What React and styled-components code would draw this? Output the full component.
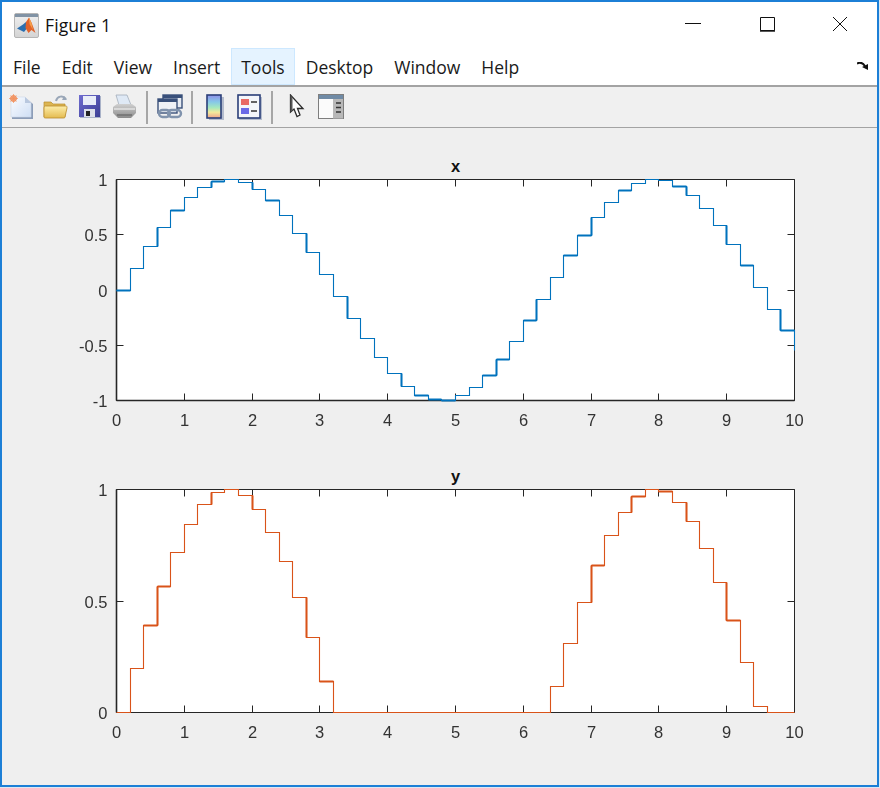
import React from "react";
import styled, { createGlobalStyle } from "styled-components";

const GlobalStyle = createGlobalStyle`
  html, body {
    margin: 0;
    padding: 0;
    background: #dce8f2;
  }
`;

const Window = styled.div`
  box-sizing: border-box;
  width: 879px;
  height: 787px;
  border: 2px solid #1c7fd6;
  background: #efefef;
  display: flex;
  flex-direction: column;
  overflow: hidden;
`;

const TitleBar = styled.div`
  height: 46px;
  background: #fff;
  display: flex;
  align-items: center;
  padding-left: 12px;
`;

const TitleText = styled.div`
  margin-left: 6px;
  font: 17.5px "Open Sans", sans-serif;
  letter-spacing: 0.1px;
  color: #111;
  flex: 1;
`;

const WinButton = styled.div`
  width: 73.5px;
  height: 46px;
  display: flex;
  align-items: center;
  justify-content: center;
  margin-top: -2px;
`;

const MenuBar = styled.div`
  height: 37px;
  background: #fff;
  border-bottom: 2px solid #a3a3a3;
  display: flex;
  align-items: stretch;
  padding-left: 1px;
  position: relative;
`;

const MenuItem = styled.div`
  box-sizing: border-box;
  padding: 0 10px;
  margin-right: 1px;
  display: flex;
  align-items: center;
  font: 17.5px "Open Sans", sans-serif;
  color: #1a1a1a;
  background: ${(p) => (p.$active ? "#e5f3ff" : "transparent")};
  box-shadow: ${(p) => (p.$active ? "inset 0 0 0 1px #cde8ff" : "none")};
`;

const DockArrow = styled.svg`
  position: absolute;
  right: 8px;
  top: 14px;
`;

const ToolBar = styled.div`
  height: 40px;
  border-bottom: 1px solid #a3a3a3;
  background: #f0f0f0;
  display: flex;
  align-items: center;
  padding-left: 2px;
`;

const ToolSlot = styled.div`
  width: ${(p) => p.$w || 35}px;
  height: 32px;
  display: flex;
  align-items: center;
  justify-content: center;
  filter: blur(0.4px);
`;

const ToolSep = styled.div`
  width: 2px;
  height: 33px;
  margin: 0 4px;
  background: #a6a6a6;
`;

const Figure = styled.div`
  flex: 1;
  background: #efefef;
  padding-top: 22px;
  display: flex;
  flex-direction: column;
  gap: 20px;
`;

const PlotSvg = styled.svg`
  display: block;
`;

const TickLabel = styled.text`
  font: 16.5px "Liberation Sans", Arial, sans-serif;
  fill: #333;
  filter: blur(0.25px);
`;

const PlotTitle = styled.text`
  font: bold 16.5px "Liberation Sans", Arial, sans-serif;
  fill: #111;
  text-anchor: middle;
`;

const sx = (t) => Math.round(114 + 67.8 * t) + 0.5;

function Plot({ title, fn, yMin, yTicks, plotH, color, thickH, thickV, heavyBottom }) {
  const top = 29.5;
  const bottom = top + plotH;
  const sy = (v) => Math.round(top + ((1 - v) / (1 - yMin)) * plotH - 0.5) + 0.5;
  const left = sx(0);
  const right = sx(10);

  const steps = [];
  for (let i = 0; i < 50; i++) steps.push({ t: i / 5, v: fn(i / 5) });
  let d = `M${left} ${sy(steps[0].v)}`;
  steps.forEach((s, i) => {
    d += ` H${i === 49 ? right : sx(s.t + 0.2)}`;
    if (i < 49) d += ` V${sy(steps[i + 1].v)}`;
  });
  d += ` V${sy(fn(10))}`;

  const has = (list, t) => list.some((x) => Math.abs(x - t) < 0.01);

  return (
    <PlotSvg width="875" height="290">
      <PlotTitle x="453.5" y="21.5">{title}</PlotTitle>
      <rect x={left} y={top} width={right - left} height={plotH} fill="#fff" />
      <g stroke="#262626" fill="none">
        <path d={`M${left} ${top} H${right} V${bottom} H${left} Z`} />
        <path d={`M${left} ${top} V${bottom}`} strokeWidth="1.6" />
        {heavyBottom && <path d={`M${left} ${bottom} H${right}`} strokeWidth="1.5" />}
        {[0, 1, 2, 3, 4, 5, 6, 7, 8, 9, 10].map((t) => (
          <path key={t} d={`M${sx(t)} ${top} v7 M${sx(t)} ${bottom} v-7`} />
        ))}
        {yTicks.map((v) => (
          <path key={v} d={`M${left} ${sy(v)} h7 M${right} ${sy(v)} h-7`} />
        ))}
      </g>
      <path d={d} fill="none" stroke={color} strokeWidth="1.1" />
      <g stroke={color} strokeWidth="2" fill="none">
        {steps.map((s, i) =>
          has(thickH, s.t) ? (
            <path key={`h${i}`} d={`M${sx(s.t)} ${sy(s.v)} H${i === 49 ? right : sx(s.t + 0.2)}`} />
          ) : null
        )}
        {steps.map((s, i) =>
          i > 0 && has(thickV, s.t) ? (
            <path key={`v${i}`} d={`M${sx(s.t)} ${sy(steps[i - 1].v)} V${sy(s.v)}`} />
          ) : null
        )}
      </g>
      {[0, 1, 2, 3, 4, 5, 6, 7, 8, 9, 10].map((t) => (
        <TickLabel key={t} x={sx(t)} y={bottom + 25} textAnchor="middle">{t}</TickLabel>
      ))}
      {yTicks.map((v) => (
        <TickLabel key={v} x="105.5" y={sy(v) + 6} textAnchor="end">{v}</TickLabel>
      ))}
    </PlotSvg>
  );
}

const MatlabIcon = () => (
  <svg width="25" height="25" viewBox="0 0 25 25">
    <defs>
      <linearGradient id="mlBody" x1="0" y1="0" x2="0" y2="1">
        <stop offset="0" stopColor="#f0f0f0" />
        <stop offset="1" stopColor="#d4d4d4" />
      </linearGradient>
    </defs>
    <rect x="0.5" y="0.5" width="24" height="24" rx="1.5" fill="url(#mlBody)" stroke="#b5b5b5" />
    <rect x="1" y="1" width="23" height="3" fill="#8193a5" />
    <path d="M3 15.5 L9 11.5 L12 9 L14 14 L10 19 Z" fill="#2a6fb0" />
    <path d="M12 9 L15 4.5 L17.5 9.5 L21.5 20 L17.5 17 L14.5 20 L11.5 15 Z" fill="#e2622a" />
    <path d="M15 4.5 L17.5 10 L19 17 L15.5 11 Z" fill="#f5a04a" />
  </svg>
);

const MinimizeIcon = () => (
  <svg width="16" height="16" viewBox="0 0 16 16">
    <path d="M0 7.5 H16" stroke="#111" />
  </svg>
);

const MaximizeIcon = () => (
  <svg width="16" height="16" viewBox="0 0 16 16">
    <path d="M1.5 1.5 H15.5 V14.5 H1.5 Z" fill="none" stroke="#111" />
    <path d="M1 15 H16" stroke="#111" strokeWidth="1.4" />
  </svg>
);

const CloseIcon = () => (
  <svg width="16" height="16" viewBox="0 0 16 16">
    <path d="M1 1 L15 15 M15 1 L1 15" stroke="#111" strokeWidth="1" />
  </svg>
);

const NewIcon = () => (
  <svg width="25" height="26" viewBox="0 0 25 26">
    <defs>
      <linearGradient id="newPage" x1="0" y1="0" x2="1" y2="1">
        <stop offset="0" stopColor="#fafcff" />
        <stop offset="1" stopColor="#cfdff5" />
      </linearGradient>
    </defs>
    <path d="M3 4 H17 L24 10 V25 H3 Z" fill="#8c9db8" />
    <path d="M2 3 H16 L22 9 V23 H2 Z" fill="url(#newPage)" stroke="#cdd8ea" strokeWidth="0.6" />
    <path d="M16 3 V9 H22 Z" fill="#b9c8df" />
    <circle cx="4.5" cy="4.5" r="3" fill="#f4a27a" stroke="#ee9060" />
    <path d="M4.5 0 V9 M0 4.5 H9 M1.5 1.5 L7.5 7.5 M7.5 1.5 L1.5 7.5" stroke="#f0905c" strokeWidth="0.7" />
  </svg>
);

const OpenIcon = () => (
  <svg width="25" height="26" viewBox="0 0 25 26">
    <defs>
      <linearGradient id="folderFront" x1="0" y1="0" x2="0" y2="1">
        <stop offset="0" stopColor="#fdeeaa" />
        <stop offset="1" stopColor="#e4bb50" />
      </linearGradient>
    </defs>
    <path d="M13 7 C14 2 20 1 23 5" fill="none" stroke="#9aa7b8" strokeWidth="2" />
    <path d="M21 2 L24 6 L19 6 Z" fill="#9aa7b8" />
    <path d="M1 10 L1 8 H8 L10 10 H22 V23 H1 Z" fill="#dcb552" stroke="#b98c2c" strokeWidth="0.7" />
    <path d="M1 14 C1 12 2 12 3 12 H23 C24 12 24 13 24 14 L22 23 C22 24 21 24 20 24 H3 C2 24 1 24 1 23 Z" fill="url(#folderFront)" stroke="#b98c2c" strokeWidth="0.8" />
  </svg>
);

const SaveIcon = () => (
  <svg width="25" height="26" viewBox="0 0 25 26">
    <defs>
      <linearGradient id="disk" x1="0" y1="0" x2="1" y2="1">
        <stop offset="0" stopColor="#6f6cd0" />
        <stop offset="1" stopColor="#3c3f94" />
      </linearGradient>
    </defs>
    <path d="M2 2 H23 V24 H2 Z" fill="#a9b2c8" />
    <path d="M1 1 H22 V23 H1 Z" fill="url(#disk)" />
    <rect x="5" y="2" width="13" height="9" fill="#e9edf8" />
    <rect x="6" y="15" width="11" height="8" fill="#dde0ea" />
    <rect x="8" y="17" width="4" height="5" fill="#222" />
  </svg>
);

const PrintIcon = () => (
  <svg width="25" height="26" viewBox="0 0 25 26">
    <defs>
      <linearGradient id="printBody" x1="0" y1="0" x2="0" y2="1">
        <stop offset="0" stopColor="#d0d0d0" />
        <stop offset="1" stopColor="#8a8a8a" />
      </linearGradient>
    </defs>
    <path d="M4 1 H15 L19 11 H7 Z" fill="#dfe9f5" stroke="#9aa5b3" strokeWidth="0.7" />
    <path d="M1 13 L5 10 H20 L24 13 V19 L19 24 H6 L1 19 Z" fill="url(#printBody)" />
    <path d="M2 15 H23" stroke="#efefef" strokeWidth="1.2" />
    <path d="M5 21 H20" stroke="#6d6d6d" strokeWidth="1.4" />
  </svg>
);

const LinkIcon = () => (
  <svg width="26" height="26" viewBox="0 0 26 26">
    <rect x="6" y="1" width="19" height="13" fill="#e6ebf2" stroke="#39507a" strokeWidth="1.4" />
    <rect x="6" y="1" width="19" height="3" fill="#39507a" />
    <rect x="1" y="5" width="19" height="14" fill="#eef1f6" stroke="#39507a" strokeWidth="1.4" />
    <rect x="1" y="5" width="19" height="3" fill="#39507a" />
    <rect x="2" y="16" width="11" height="7" rx="3.5" fill="none" stroke="#8093ad" strokeWidth="2.4" />
    <rect x="11" y="16" width="13" height="7" rx="3.5" fill="none" stroke="#8093ad" strokeWidth="2.4" />
  </svg>
);

const ColorbarIcon = () => (
  <svg width="18" height="26" viewBox="0 0 18 26">
    <defs>
      <linearGradient id="cbar" x1="0" y1="0" x2="0" y2="1">
        <stop offset="0" stopColor="#8f8fe8" />
        <stop offset="0.3" stopColor="#86c8e8" />
        <stop offset="0.55" stopColor="#a5e8bd" />
        <stop offset="0.75" stopColor="#f2ea9c" />
        <stop offset="1" stopColor="#f0a38a" />
      </linearGradient>
    </defs>
    <rect x="3" y="3" width="15" height="23" fill="#b4bccd" />
    <rect x="1" y="1" width="14" height="23" fill="url(#cbar)" stroke="#2b3f78" strokeWidth="1.6" />
  </svg>
);

const LegendIcon = () => (
  <svg width="25" height="26" viewBox="0 0 25 26">
    <rect x="2" y="3" width="23" height="23" fill="#b4bccd" />
    <rect x="1" y="1" width="22" height="23" fill="#f4f6fa" stroke="#2b3f78" strokeWidth="1.6" />
    <rect x="4" y="5" width="8" height="6" fill="#e86a66" />
    <rect x="4" y="14" width="8" height="6" fill="#6a6ae8" />
    <path d="M14 8 H20 M14 17 H20" stroke="#333" strokeWidth="1.6" />
  </svg>
);

const ArrowIcon = () => (
  <svg width="16" height="26" viewBox="0 0 16 26">
    <path d="M1.5 1 V18 L5 15 L8 22.5 L11 21 L8.5 14.5 H14 Z" fill="#fff" stroke="#2b2b2b" strokeWidth="1.3" />
    <path d="M1.5 1 V18 L3.5 16.5 V4 Z" fill="#555" />
  </svg>
);

const PanelIcon = () => (
  <svg width="26" height="26" viewBox="0 0 26 26">
    <rect x="0.5" y="0.5" width="25" height="24" fill="#fbfbfb" stroke="#7e7e7e" />
    <rect x="1" y="1" width="24" height="4" fill="#6f8aa5" />
    <rect x="15" y="5" width="10" height="19.5" fill="#b8b8b8" />
    <path d="M18 9 H23 M18 13.5 H23 M18 18 H23" stroke="#333" strokeWidth="1.6" />
  </svg>
);

const menus = ["File", "Edit", "View", "Insert", "Tools", "Desktop", "Window", "Help"];

const sine = (t) => Math.sin(t);
const halfSine = (t) => Math.max(Math.sin(t), 0);

export default function App() {
  return (
    <>
      <GlobalStyle />
      <Window>
        <TitleBar>
          <MatlabIcon />
          <TitleText>Figure 1</TitleText>
          <WinButton><MinimizeIcon /></WinButton>
          <WinButton><MaximizeIcon /></WinButton>
          <WinButton><CloseIcon /></WinButton>
        </TitleBar>
        <MenuBar>
          {menus.map((m) => (
            <MenuItem key={m} $active={m === "Tools"}>{m}</MenuItem>
          ))}
          <DockArrow width="12" height="9" viewBox="0 0 12 9">
            <path d="M0 1.5 C3 0 6 1 8 4" fill="none" stroke="#111" strokeWidth="2" />
            <path d="M5 5 L11 8 L11 2 Z" fill="#111" />
          </DockArrow>
        </MenuBar>
        <ToolBar>
          <ToolSlot $w={34.5}><NewIcon /></ToolSlot>
          <ToolSlot $w={34.5}><OpenIcon /></ToolSlot>
          <ToolSlot $w={34.5}><SaveIcon /></ToolSlot>
          <ToolSlot $w={34.5}><PrintIcon /></ToolSlot>
          <ToolSep />
          <ToolSlot><LinkIcon /></ToolSlot>
          <ToolSep />
          <ToolSlot><ColorbarIcon /></ToolSlot>
          <ToolSlot><LegendIcon /></ToolSlot>
          <ToolSep />
          <ToolSlot $w={39}><ArrowIcon /></ToolSlot>
          <ToolSlot $w={29}><PanelIcon /></ToolSlot>
        </ToolBar>
        <Figure>
          <Plot
            title="x"
            fn={sine}
            yMin={-1}
            yTicks={[1, 0.5, 0, -0.5, -1]}
            plotH={221}
            color="#0072bd"
            heavyBottom
            thickH={[0, 0.8, 1.4, 2.2, 4.4, 4.6, 4.8, 5.4, 5.6, 6.0, 6.6, 6.8, 7.4, 8.2, 9.2, 9.8]}
            thickV={[0.6, 1.4, 2.0, 2.8, 3.4, 4.2, 5.6, 6.2, 7.0, 8.4, 9.0, 9.8]}
          />
          <Plot
            title="y"
            fn={halfSine}
            yMin={0}
            yTicks={[1, 0.5, 0]}
            plotH={223}
            color="#d95319"
            thickH={[0.4, 0.6, 3.0, 7.0, 7.6, 8.0, 9.0]}
            thickV={[0.6, 1.4, 2.0, 2.8, 7.0, 7.6, 8.4, 9.0]}
          />
        </Figure>
      </Window>
    </>
  );
}
